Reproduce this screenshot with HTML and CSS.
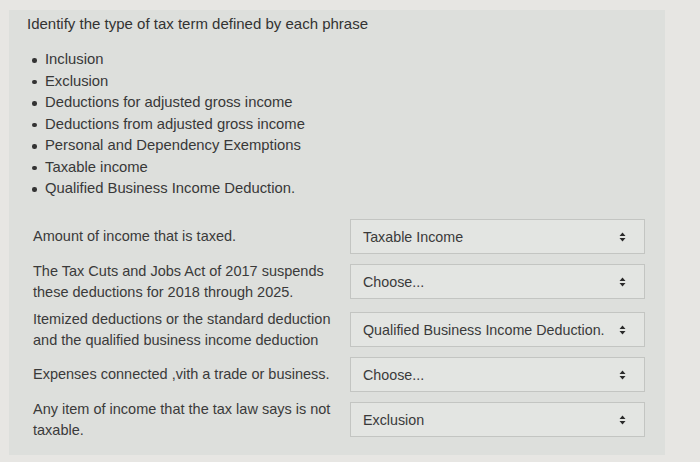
FILE: index.html
```html
<!DOCTYPE html>
<html>
<head>
<meta charset="utf-8">
<link rel="stylesheet" href="styles.css">
</head>
<body>
<div class="panel">
  <p class="title">Identify the type of tax term defined by each phrase</p>
  <ul class="terms">
    <li>Inclusion</li>
    <li>Exclusion</li>
    <li>Deductions for adjusted gross income</li>
    <li>Deductions from adjusted gross income</li>
    <li>Personal and Dependency Exemptions</li>
    <li>Taxable income</li>
    <li>Qualified Business Income Deduction.</li>
  </ul>
  <div class="rows">
    <div class="row">
      <div class="phrase">Amount of income that is taxed.</div>
      <div class="select"><span>Taxable Income</span><svg class="arrows" width="7" height="10" viewBox="0 0 7 10"><path d="M3.5 0.5 L6.5 4 L0.5 4 Z M0.5 6 L6.5 6 L3.5 9.5 Z" fill="#2a2a2a"/></svg></div>
    </div>
    <div class="row">
      <div class="phrase">The Tax Cuts and Jobs Act of 2017 suspends these deductions for 2018 through 2025.</div>
      <div class="select"><span>Choose...</span><svg class="arrows" width="7" height="10" viewBox="0 0 7 10"><path d="M3.5 0.5 L6.5 4 L0.5 4 Z M0.5 6 L6.5 6 L3.5 9.5 Z" fill="#2a2a2a"/></svg></div>
    </div>
    <div class="row">
      <div class="phrase">Itemized deductions or the standard deduction and the qualified business income deduction</div>
      <div class="select"><span>Qualified Business Income Deduction.</span><svg class="arrows" width="7" height="10" viewBox="0 0 7 10"><path d="M3.5 0.5 L6.5 4 L0.5 4 Z M0.5 6 L6.5 6 L3.5 9.5 Z" fill="#2a2a2a"/></svg></div>
    </div>
    <div class="row">
      <div class="phrase">Expenses connected ,vith a trade or business.</div>
      <div class="select"><span>Choose...</span><svg class="arrows" width="7" height="10" viewBox="0 0 7 10"><path d="M3.5 0.5 L6.5 4 L0.5 4 Z M0.5 6 L6.5 6 L3.5 9.5 Z" fill="#2a2a2a"/></svg></div>
    </div>
    <div class="row">
      <div class="phrase">Any item of income that the tax law says is not taxable.</div>
      <div class="select"><span>Exclusion</span><svg class="arrows" width="7" height="10" viewBox="0 0 7 10"><path d="M3.5 0.5 L6.5 4 L0.5 4 Z M0.5 6 L6.5 6 L3.5 9.5 Z" fill="#2a2a2a"/></svg></div>
    </div>
  </div>
</div>
</body>
</html>
```
FILE: styles.css
```css
html, body {
  margin: 0;
  padding: 0;
}
body {
  width: 700px;
  height: 462px;
  overflow: hidden;
  background: #e7e6e3;
  font-family: "Liberation Sans", Arial, sans-serif;
  color: #3a3a3a;
}
.panel {
  margin: 10px 35px 0 9px;
  height: 445px;
  box-sizing: border-box;
  background: #dddfdc;
  padding: 4px 0 0 18px;
}
.title {
  margin: 0;
  font-size: 15px;
  line-height: 20px;
  color: #333;
}
.terms {
  margin: 15px 0 0 0;
  padding: 0 0 0 18px;
  list-style: none;
}
.terms li {
  position: relative;
  font-size: 14.8px;
  line-height: 21.5px;
  color: #383838;
}
.terms li::before {
  content: "";
  position: absolute;
  left: -13px;
  top: 9px;
  width: 4.5px;
  height: 4.5px;
  border-radius: 50%;
  background: #333;
}
.rows {
  margin-top: 19px;
  display: flex;
  flex-direction: column;
  gap: 6px;
  padding-left: 6px;
}
.row {
  display: flex;
  align-items: center;
  min-height: 36px;
}
.phrase {
  width: 317px;
  font-size: 14.5px;
  line-height: 21px;
  color: #3a3a3a;
}
.select {
  width: 295px;
  height: 35px;
  box-sizing: border-box;
  border: 1px solid #c3c5c2;
  background: #e3e5e2;
  display: flex;
  align-items: center;
  justify-content: space-between;
  padding: 0 18px 0 12px;
  font-size: 14.3px;
  color: #3a3a3a;
}
.arrows {
  display: block;
}
```
